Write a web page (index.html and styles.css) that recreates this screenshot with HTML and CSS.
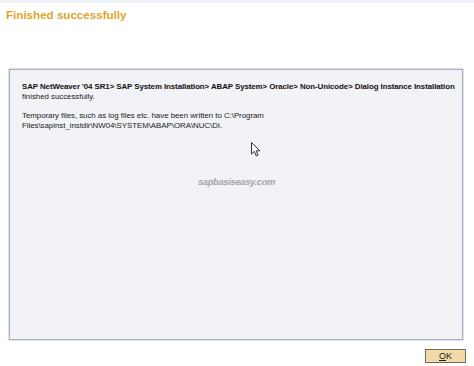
FILE: index.html
```html
<!DOCTYPE html>
<html>
<head>
  <meta charset='utf-8'>
  <meta name='viewport' content='width=device-width, initial-scale=1.0'>
  <title>Finished successfully</title>
  <link rel="stylesheet" href="styles.css">
</head>
<body>
  <div class='topline'></div>
  <h1 class='title'>Finished successfully</h1>
  <div class='panel-wrap'>
    <div class='panel'>
      <p class='msg'><b class='head'>SAP NetWeaver '04 SR1&gt; SAP System Installation&gt; ABAP System&gt; Oracle&gt; Non-Unicode&gt; Dialog Instance Installation</b><br>finished successfully.</p>
      <p class='msg'>Temporary files, such as log files etc. have been written to C:\Program<br>Files\sapinst_instdir\NW04\SYSTEM\ABAP\ORA\NUC\DI.</p>
      <svg class='cursor' width='10' height='16' viewBox='0 0 10 16'>
        <path d='M0.5 0.5 L0.5 12 L3.3 9.4 L5.3 14 L7 13.2 L5.1 8.8 L8.8 8.8 Z' fill='#fff' stroke='#333' stroke-width='1'/>
      </svg>
      <div class='mark'>sapbasiseasy.com</div>
    </div>
  </div>
  <div class='actions'>
    <button class='ok'><u>O</u>K</button>
  </div>
</body>
</html>
```

FILE: styles.css
```css
*{box-sizing: border-box;}

body {
  margin: 0;
  width: 474px;
  height: 366px;
  background-color: #fff;
  font-family: "Liberation Sans", Arial, sans-serif;
  overflow: hidden;
}

.topline {
  height: 3px;
  background-color: #eef1f6;
}

.title {
  margin: 5px 0 0 6px;
  font-size: 11.6px;
  font-weight: bold;
  color: #e0a42a;
  line-height: 14px;
}

.panel-wrap {
  margin: 46px 10px 0 8px;
  border: 1px solid #dde2ea;
}

.panel {
  position: relative;
  height: 271px;
  padding: 12px 12px;
  background-color: #f1f3f7;
  border: 1px solid #a9b1bd;
}

.msg {
  margin: 0 0 9px;
  font-size: 7.9px;
  line-height: 10px;
  color: #222;
  white-space: nowrap;
  letter-spacing: -0.04px;
}

.head {
  color: #111;
  letter-spacing: -0.08px;
}

.cursor {
  position: absolute;
  left: 241px;
  top: 72px;
}

.mark {
  position: absolute;
  left: 188px;
  top: 107px;
  font-family: "Liberation Sans", sans-serif;
  font-size: 9.3px;
  font-style: italic;
  font-weight: bold;
  color: #a4a4a4;
  letter-spacing: -0.3px;
}

.actions {
  display: flex;
  justify-content: flex-end;
  padding: 8px 8px 0 0;
}

.ok {
  width: 41px;
  height: 14px;
  padding: 0;
  background-color: #f2dba6;
  border: 1px solid #6f6a5e;
  font: 9px "Liberation Sans", Arial, sans-serif;
  color: #222;
}
```
